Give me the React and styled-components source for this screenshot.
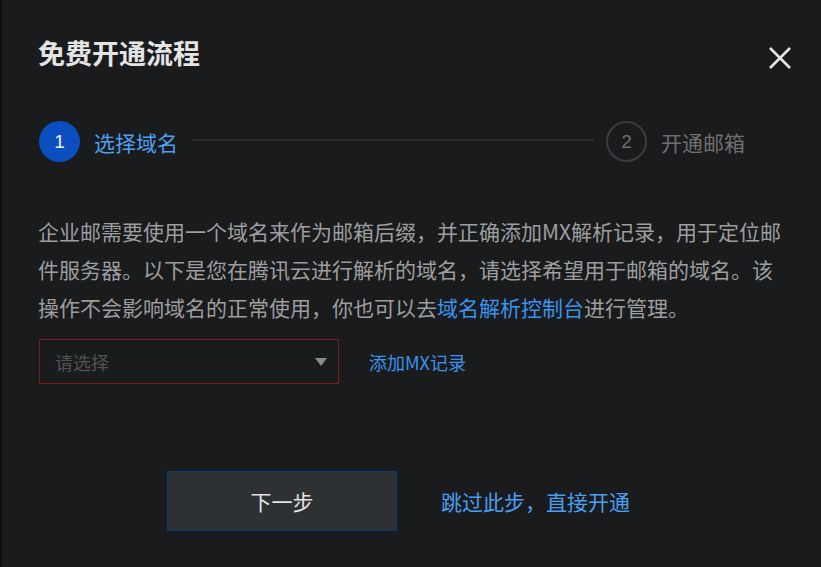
import React from "react";
import styled, { createGlobalStyle } from "styled-components";

const GlobalStyle = createGlobalStyle`
    html, body {
        margin: 0;
        padding: 0;
        background: #1a1b1d;
        font-family: "Noto Sans CJK SC", "Noto Sans", sans-serif;
    }
`;

const Page = styled.div`
    display: flex;
    width: 821px;
    height: 567px;
    overflow: hidden;
`;

const Edge = styled.div`
    width: 2px;
    background: #0e0f11;
`;

const Modal = styled.div`
    flex: 1;
    display: flex;
    flex-direction: column;
    box-sizing: border-box;
    padding: 35px 30px 0 36px;
    background: #1a1b1d;
`;

const Header = styled.div`
    display: flex;
    justify-content: space-between;
    align-items: flex-start;
`;

const Title = styled.div`
    font-size: 27px;
    line-height: 36px;
    font-weight: 700;
    color: #e4e4e4;
`;

const Close = styled.button`
    margin-top: 12px;
    width: 22px;
    height: 22px;
    padding: 0;
    border: none;
    background: none;
    cursor: pointer;
    display: flex;
`;

const Steps = styled.div`
    margin-top: 50px;
    width: 706px;
    display: flex;
    align-items: center;
    padding-left: 1px;
`;

const Circle = styled.div`
    box-sizing: border-box;
    width: 41px;
    height: 41px;
    border-radius: 50%;
    display: flex;
    align-items: center;
    justify-content: center;
    font-family: "Liberation Sans", sans-serif;
    font-size: 19px;
    background: ${(p) => (p.active ? "#0b4ec0" : "transparent")};
    border: ${(p) => (p.active ? "none" : "2px solid #3b3c3f")};
    color: ${(p) => (p.active ? "#e8eefa" : "#6e6f71")};
`;

const StepLabel = styled.div`
    margin-left: 14px;
    font-size: 21px;
    line-height: 30px;
    color: ${(p) => (p.active ? "#4ea0f0" : "#6e6f71")};
`;

const StepLine = styled.div`
    flex: 1;
    height: 2px;
    margin: 0 12px 3px 14px;
    background: #2a2b2e;
`;

const Text = styled.p`
    margin: 50px 0 0 0;
    width: 752px;
    font-size: 21px;
    line-height: 38px;
    color: #9d9e9f;
`;

const Link = styled.a`
    color: ${(p) => p.color || "#3a93ec"};
    text-decoration: none;
    cursor: pointer;
`;

const SelectRow = styled.div`
    margin-top: 13px;
    margin-left: 1px;
    display: flex;
    align-items: center;
    gap: 30px;
`;

const Select = styled.div`
    box-sizing: border-box;
    width: 300px;
    height: 45px;
    border: 1px solid #7a1d1f;
    display: flex;
    align-items: center;
    justify-content: space-between;
    padding: 0 11px 0 15px;
    font-size: 18px;
    color: #515254;
`;

const Caret = styled.span`
    width: 0;
    height: 0;
    border-left: 6px solid transparent;
    border-right: 6px solid transparent;
    border-top: 8px solid #8a8b8d;
`;

const SmallLink = styled(Link)`
    font-size: 18px;
`;

const Actions = styled.div`
    margin-top: 87px;
    margin-left: 129px;
    display: flex;
    align-items: center;
    gap: 44px;
`;

const NextButton = styled.button`
    box-sizing: border-box;
    width: 230px;
    height: 60px;
    background: #2e3134;
    border: 1px solid #0b3a7c;
    color: #e2e2e2;
    font-family: inherit;
    font-size: 21px;
    cursor: pointer;
`;

const SkipLink = styled(Link)`
    font-size: 21px;
`;

export default function App() {
    return (
        <Page>
            <GlobalStyle />
            <Edge />
            <Modal>
                <Header>
                    <Title>免费开通流程</Title>
                    <Close aria-label="关闭">
                        <svg width="22" height="22" viewBox="0 0 22 22">
                            <path d="M1 1 L21 21 M21 1 L1 21" stroke="#e6e6e6" strokeWidth="2.6" />
                        </svg>
                    </Close>
                </Header>
                <Steps>
                    <Circle active>1</Circle>
                    <StepLabel active>选择域名</StepLabel>
                    <StepLine />
                    <Circle>2</Circle>
                    <StepLabel>开通邮箱</StepLabel>
                </Steps>
                <Text>
                    企业邮需要使用一个域名来作为邮箱后缀，并正确添加MX解析记录，用于定位邮件服务器。以下是您在腾讯云进行解析的域名，请选择希望用于邮箱的域名。该操作不会影响域名的正常使用，你也可以去
                    <Link>域名解析控制台</Link>进行管理。
                </Text>
                <SelectRow>
                    <Select>
                        <span>请选择</span>
                        <Caret />
                    </Select>
                    <SmallLink>添加MX记录</SmallLink>
                </SelectRow>
                <Actions>
                    <NextButton>下一步</NextButton>
                    <SkipLink color="#4a9ff2">跳过此步，直接开通</SkipLink>
                </Actions>
            </Modal>
        </Page>
    );
}
